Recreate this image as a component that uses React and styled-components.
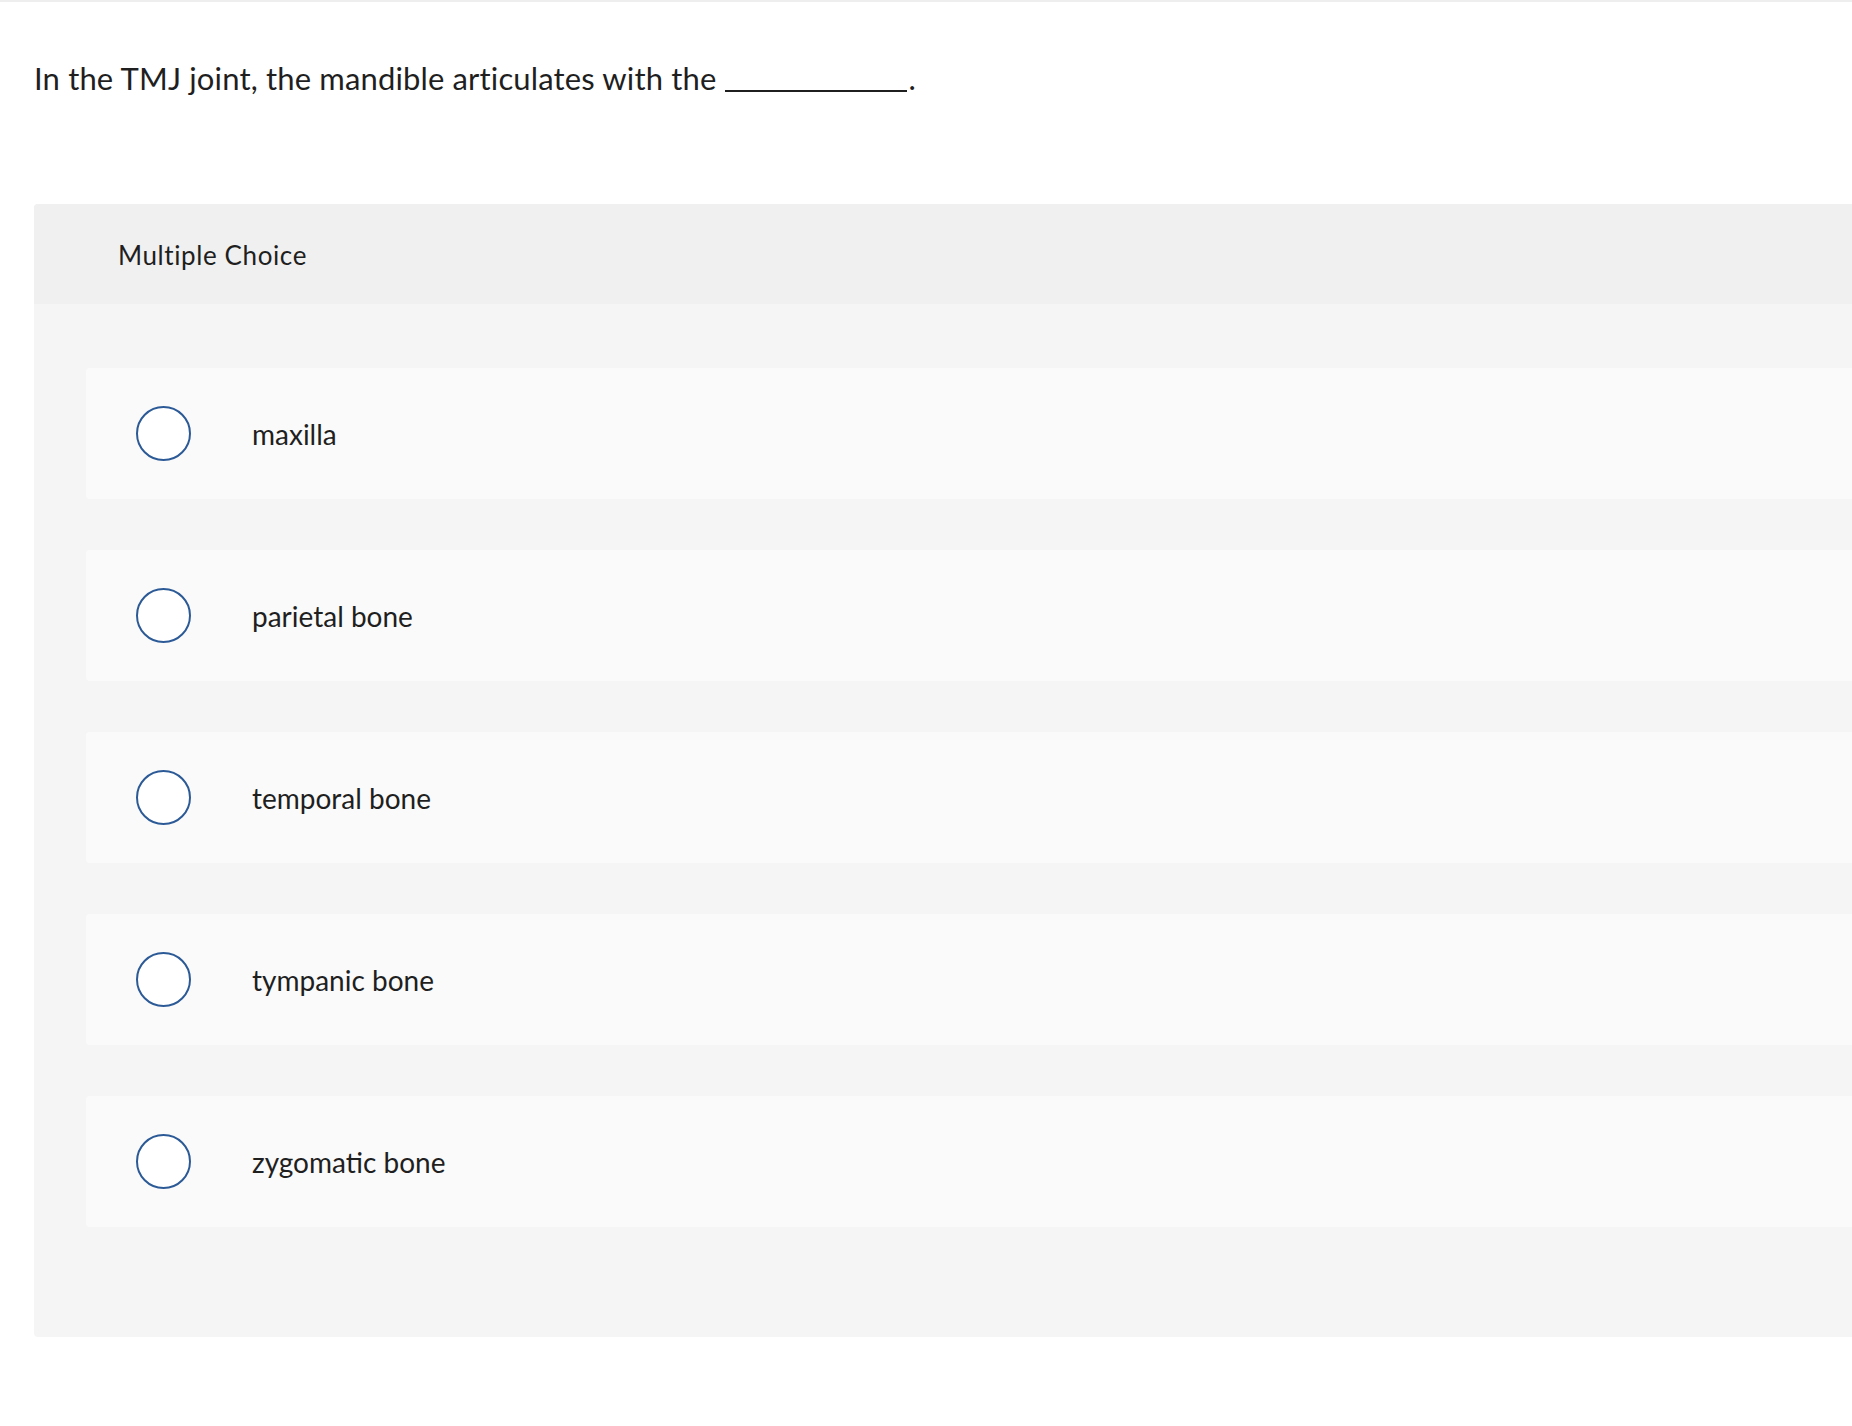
import React from "react";
import styled, { createGlobalStyle } from "styled-components";

const Global = createGlobalStyle`
  html, body {
    margin: 0;
    padding: 0;
    background: #ffffff;
    overflow-x: hidden;
  }
  body {
    font-family: "Lato", "Liberation Sans", sans-serif;
    color: #1f1f1f;
  }
`;

const Page = styled.div`
  border-top: 2px solid #eeeeee;
  min-height: 1424px;
  box-sizing: border-box;
  padding: 0 0 0 34px;
`;

const Question = styled.p`
  margin: 0;
  padding-top: 58px;
  font-size: 31px;
  line-height: 36px;
  letter-spacing: 0.15px;
  color: #1f1f1f;
`;

const Blank = styled.span`
  display: inline-block;
  width: 182px;
  border-bottom: 2px solid #1f1f1f;
  margin-right: 2px;
  vertical-align: baseline;
  transform: translateY(2px);
`;

const Panel = styled.section`
  margin-top: 108px;
  border-radius: 4px 0 0 4px;
  overflow: hidden;
  background: #f5f5f5;
`;

const PanelHeader = styled.header`
  height: 100px;
  box-sizing: border-box;
  display: flex;
  align-items: center;
  padding: 2px 0 0 84px;
  background: #f0f0f0;
  font-size: 26px;
  letter-spacing: 0.6px;
  color: #1f1f1f;
`;

const Choices = styled.div`
  display: flex;
  flex-direction: column;
  gap: 51px;
  padding: 64px 0 110px 52px;
`;

const Choice = styled.label`
  height: 131px;
  display: flex;
  align-items: center;
  padding-left: 50px;
  background: #fafafa;
  border-radius: 4px 0 0 4px;
  cursor: pointer;
`;

const Radio = styled.span`
  width: 55px;
  height: 55px;
  box-sizing: border-box;
  border-radius: 50%;
  border: 2px solid #2c5a96;
  background: #ffffff;
  flex: none;
`;

const ChoiceText = styled.span`
  margin-left: 61px;
  font-size: 28px;
  color: #1f1f1f;
`;

const options = [
  "maxilla",
  "parietal bone",
  "temporal bone",
  "tympanic bone",
  "zygomatic bone",
];

export default function App() {
  return (
    <>
      <Global />
      <Page>
        <Question>
          In the TMJ joint, the mandible articulates with the <Blank />.
        </Question>
        <Panel>
          <PanelHeader>Multiple Choice</PanelHeader>
          <Choices>
            {options.map((o) => (
              <Choice key={o}>
                <Radio />
                <ChoiceText>{o}</ChoiceText>
              </Choice>
            ))}
          </Choices>
        </Panel>
      </Page>
    </>
  );
}
